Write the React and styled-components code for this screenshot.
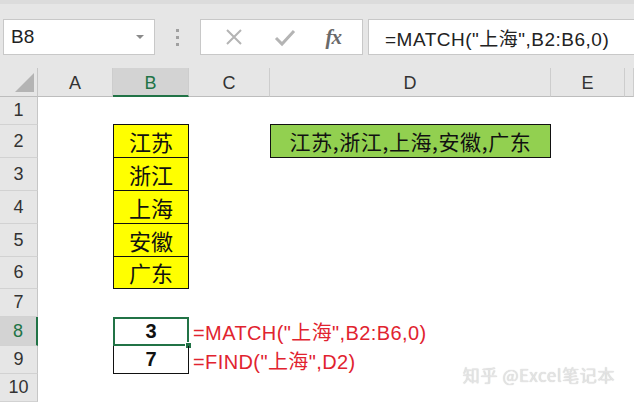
import React from "react";
import styled, { createGlobalStyle } from "styled-components";

const GlobalStyle = createGlobalStyle`
  html, body {
    margin: 0;
    padding: 0;
    background: #ffffff;
  }
  * {
    box-sizing: border-box;
  }
`;

const COLS = ["A", "B", "C", "D", "E"];
const ROW_HEIGHTS = [28, 33, 33, 33, 33, 32, 28, 29, 28, 28];
const CITIES = ["江苏", "浙江", "上海", "安徽", "广东"];

const Page = styled.div`
  position: relative;
  width: 634px;
  height: 404px;
  overflow: hidden;
  font-family: "Liberation Sans", "Noto Sans CJK SC", sans-serif;
  background: #fff;
`;

const Toolbar = styled.div`
  display: flex;
  align-items: center;
  height: 68px;
  padding: 17px 0 15px 3px;
  background: #e6e6e6;
  border-top: 4px solid #dcdcdc;
`;

const NameBox = styled.div`
  display: flex;
  align-items: center;
  justify-content: space-between;
  width: 152px;
  height: 36px;
  padding: 0 10px 0 7px;
  background: #fff;
  border: 1px solid #c8c8c8;
  font-size: 19px;
  color: #222;
`;

const Caret = styled.span`
  width: 0;
  height: 0;
  border-left: 4px solid transparent;
  border-right: 4px solid transparent;
  border-top: 4px solid #8a8a8a;
`;

const Grip = styled.div`
  display: flex;
  flex-direction: column;
  gap: 4px;
  width: 45px;
  align-items: center;
`;

const GripDot = styled.span`
  width: 3px;
  height: 3px;
  background: #a0a0a0;
`;

const FnButtons = styled.div`
  display: flex;
  align-items: center;
  justify-content: space-around;
  width: 163px;
  height: 36px;
  padding: 0 6px 0 8px;
  background: #fff;
  border: 1px solid #c8c8c8;
`;

const FxLabel = styled.span`
  font-family: "Liberation Serif", serif;
  font-style: italic;
  font-weight: bold;
  font-size: 21px;
  color: #6a6a6a;
  letter-spacing: -1px;
`;

const FormulaInput = styled.div`
  display: flex;
  align-items: center;
  flex: 1;
  height: 36px;
  margin-left: 5px;
  padding-left: 16px;
  background: #fff;
  border: 1px solid #c8c8c8;
  border-right: none;
  font-size: 19px;
  letter-spacing: 0.5px;
  color: #222;
  white-space: nowrap;
`;

const Sheet = styled.div`
  display: grid;
  grid-template-columns: 38px 75px 76px 81px 281px 74px 1fr;
  grid-template-rows: 29px ${ROW_HEIGHTS.map((h) => `${h}px`).join(" ")};
  background: #fff;
`;

const Corner = styled.div`
  grid-column: 1;
  grid-row: 1;
  position: relative;
  background: #e6e6e6;
  border-right: 1px solid #c6c6c6;
  border-bottom: 1px solid #bdbdbd;
`;

const CornerTriangle = styled.span`
  position: absolute;
  right: 3px;
  bottom: 4px;
  width: 0;
  height: 0;
  border-left: 19px solid transparent;
  border-bottom: 19px solid #b4b4b4;
`;

const ColHeader = styled.div`
  grid-row: 1;
  grid-column: ${(p) => p.$col};
  display: flex;
  align-items: center;
  justify-content: center;
  padding-top: 3px;
  font-size: 18px;
  color: ${(p) => (p.$active ? "#217346" : "#333")};
  background: ${(p) => (p.$active ? "#d3d3d3" : "#e6e6e6")};
  border-right: 1px solid #cdcdcd;
  border-bottom: ${(p) => (p.$active ? "2px solid #217346" : "1px solid #bdbdbd")};
`;

const RowHeader = styled.div`
  grid-column: 1;
  grid-row: ${(p) => p.$row};
  display: flex;
  align-items: center;
  justify-content: center;
  font-size: 18px;
  color: ${(p) => (p.$active ? "#217346" : "#333")};
  background: ${(p) => (p.$active ? "#d3d3d3" : "#e6e6e6")};
  border-bottom: 1px solid #d2d2d2;
  border-right: ${(p) => (p.$active ? "2px solid #217346" : "1px solid #c6c6c6")};
`;

const Cell = styled.div`
  grid-column: ${(p) => p.$col};
  grid-row: ${(p) => p.$row};
  display: flex;
  align-items: center;
  justify-content: center;
  font-size: 20px;
  color: #111;
`;

const CityCell = styled(Cell)`
  font-family: "Noto Sans CJK SC", sans-serif;
  font-size: 22px;
  background: #ffff00;
  border: 1px solid #111;
  border-top-width: ${(p) => (p.$first ? "1px" : "0")};
  margin-top: ${(p) => (p.$first ? "-1px" : "0")};
  padding-bottom: 1px;
`;

const JoinedCell = styled(Cell)`
  font-family: "Noto Sans CJK SC", sans-serif;
  font-size: 21px;
  letter-spacing: 0.6px;
  background: #92d050;
  border: 1px solid #111;
  margin-top: -1px;
  padding-bottom: 1px;
`;

const ResultCell = styled(Cell)`
  position: relative;
  font-weight: bold;
  font-size: 20px;
  border: ${(p) => (p.$selected ? "2px solid #217346" : "1px solid #111")};
  border-top-width: ${(p) => (p.$selected ? "2px" : "0")};
`;

const FillHandle = styled.span`
  position: absolute;
  right: -5px;
  bottom: -5px;
  width: 7px;
  height: 7px;
  background: #217346;
  border: 1px solid #fff;
`;

const FormulaNote = styled(Cell)`
  justify-content: flex-start;
  padding-left: 4px;
  white-space: nowrap;
  overflow: visible;
  color: #e1232f;
  font-size: 20px;
  letter-spacing: 0.4px;
`;

const Watermark = styled.div`
  position: absolute;
  right: 19px;
  bottom: 17px;
  font-family: "Noto Sans CJK SC", sans-serif;
  font-size: 17px;
  letter-spacing: 0.6px;
  color: #e4e4e4;
  text-shadow: 0 0 1px #c4c4c4;
  white-space: nowrap;
`;

const CrossIcon = () => (
  <svg width="20" height="20" viewBox="0 0 20 20">
    <path d="M3 3 L17 17 M17 3 L3 17" stroke="#b4b4b4" strokeWidth="2" fill="none" />
  </svg>
);

const CheckIcon = () => (
  <svg width="22" height="20" viewBox="0 0 22 20">
    <path d="M2 11 L8 17 L20 4" stroke="#b4b4b4" strokeWidth="3" fill="none" />
  </svg>
);

const App = () => {
  return (
    <Page>
      <GlobalStyle />
      <Toolbar>
        <NameBox>
          B8
          <Caret />
        </NameBox>
        <Grip>
          <GripDot />
          <GripDot />
          <GripDot />
        </Grip>
        <FnButtons>
          <CrossIcon />
          <CheckIcon />
          <FxLabel>fx</FxLabel>
        </FnButtons>
        <FormulaInput>=MATCH("上海",B2:B6,0)</FormulaInput>
      </Toolbar>

      <Sheet>
        <Corner>
          <CornerTriangle />
        </Corner>
        {COLS.map((c, i) => (
          <ColHeader key={c} $col={i + 2} $active={c === "B"}>
            {c}
          </ColHeader>
        ))}
        <ColHeader $col={7} />
        {ROW_HEIGHTS.map((_, i) => (
          <RowHeader key={i} $row={i + 2} $active={i + 1 === 8}>
            {i + 1}
          </RowHeader>
        ))}

        {CITIES.map((city, i) => (
          <CityCell key={city} $col={3} $row={i + 3} $first={i === 0}>
            {city}
          </CityCell>
        ))}

        <JoinedCell $col={5} $row={3}>
          江苏,浙江,上海,安徽,广东
        </JoinedCell>

        <ResultCell $col={3} $row={9} $selected>
          3
          <FillHandle />
        </ResultCell>
        <ResultCell $col={3} $row={10}>
          7
        </ResultCell>

        <FormulaNote $col={4} $row={9}>
          =MATCH("上海",B2:B6,0)
        </FormulaNote>
        <FormulaNote $col={4} $row={10}>
          =FIND("上海",D2)
        </FormulaNote>
      </Sheet>

      <Watermark>知乎 @Excel笔记本</Watermark>
    </Page>
  );
};

export default App;
